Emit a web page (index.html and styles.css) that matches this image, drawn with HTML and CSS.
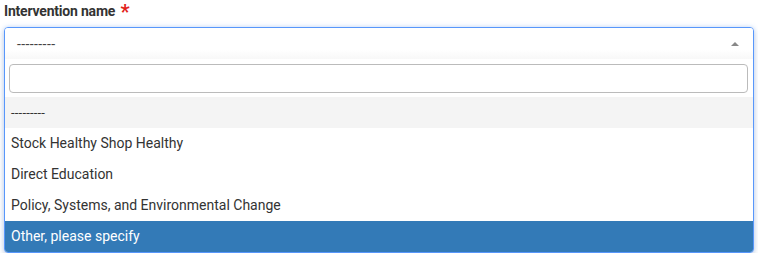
FILE: index.html
```html
<!DOCTYPE html>
<html lang="en">

  <head>
    <meta charset="UTF-8">
    <title>Intervention name</title>
    <link rel="stylesheet" href="styles.css">
  </head>

  <body>
    <div class="field">
      <label class="field-label">Intervention name <span class="required">*</span></label>

      <div class="select open">
        <div class="selection">
          <span class="selection-text">---------</span>
          <span class="arrow"></span>
        </div>
        <div class="dropdown">
          <div class="search">
            <input type="text" class="search-input">
          </div>
          <ul class="results">
            <li class="option highlighted-gray">---------</li>
            <li class="option">Stock Healthy Shop Healthy</li>
            <li class="option">Direct Education</li>
            <li class="option">Policy, Systems, and Environmental Change</li>
            <li class="option selected">Other, please specify</li>
          </ul>
        </div>
      </div>
    </div>
  </body>

</html>
```

FILE: styles.css
```css
body {
  margin: 0;
  font-family: Roboto, "Liberation Sans", Arial, sans-serif;
  font-size: 14px;
  color: #333;
  background: #fff;
}

.field {
  padding: 0 4px;
}

.field-label {
  display: block;
  height: 27px;
  line-height: 22px;
  font-weight: bold;
  font-size: 14px;
  color: #333;
  letter-spacing: -0.2px;
}

.required {
  color: #e2231a;
  font-size: 20px;
  vertical-align: -3px;
  margin-left: 2px;
}

.select {
  width: 748px;
  border: 1px solid #5897fb;
  border-radius: 4px;
  box-shadow: 0 0 5px rgba(88, 151, 251, 0.35), 0 3px 6px rgba(0, 0, 0, 0.12);
  background: #fff;
  overflow: hidden;
}

.selection {
  height: 31px;
  display: flex;
  align-items: center;
  justify-content: space-between;
  padding: 0 12px;
  background: linear-gradient(#fff 70%, #f8f8f8);
}

.selection-text {
  color: #444;
  font-size: 14px;
  letter-spacing: 0.4px;
}

.arrow {
  width: 0;
  height: 0;
  border-left: 4px solid transparent;
  border-right: 4px solid transparent;
  border-bottom: 4px solid #888;
  margin-right: 2px;
}

.search {
  padding: 5px 5px 4px 4px;
}

.search-input {
  display: block;
  box-sizing: border-box;
  width: 100%;
  height: 29px;
  border: 1px solid #bbb;
  border-radius: 4px;
  margin: 0;
  outline: none;
}

.results {
  list-style: none;
  margin: 0;
  padding: 0;
}

.option {
  height: 31px;
  line-height: 31px;
  padding: 0 6px;
  color: #333;
}

.option.highlighted-gray {
  background: #f4f4f4;
  font-size: 13px;
  letter-spacing: 0.2px;
}

.option.selected {
  background: #337ab7;
  color: #fff;
}
```
